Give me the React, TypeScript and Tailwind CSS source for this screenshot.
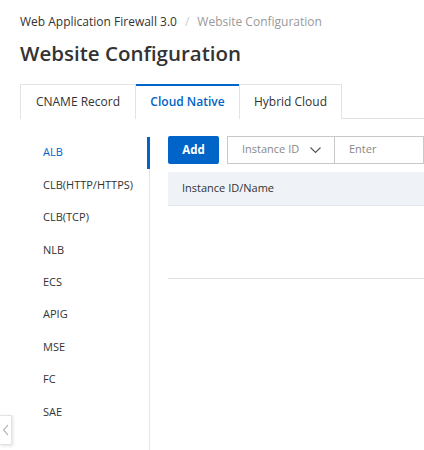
import React from 'react';

const navItems = ['ALB', 'CLB(HTTP/HTTPS)', 'CLB(TCP)', 'NLB', 'ECS', 'APIG', 'MSE', 'FC', 'SAE'];

export default function App() {
    return (
        <div className="relative w-[424px] h-[450px] overflow-hidden bg-white text-[#333] font-['Open_Sans',sans-serif]">
            {/* Breadcrumb */}
            <div className="pl-[20px] pt-[14px] text-[12px] leading-[16px] flex items-center gap-[8px]">
                <span className="text-[#333]">Web Application Firewall 3.0</span>
                <span className="text-[#ccc]">/</span>
                <span className="text-[#999]">Website Configuration</span>
            </div>

            {/* Title */}
            <h1 className="pl-[20px] mt-[9px] text-[20.5px] leading-[28px] font-semibold text-[#333]">Website Configuration</h1>

            {/* Tabs */}
            <div className="ml-[20px] mt-[17px] flex border-b border-[#e3e3e3] h-[35px]">
                <div className="w-[116px] flex items-center justify-center border border-[#e3e3e3] border-b-0 text-[12px] text-[#333] -mb-px bg-white">CNAME Record</div>
                <div className="w-[103px] flex items-center justify-center border-t-2 border-t-[#0064c8] border-b border-b-white text-[12px] font-semibold text-[#0064c8] -mb-px bg-white">Cloud Native</div>
                <div className="w-[103px] flex items-center justify-center border border-[#e3e3e3] border-b-0 text-[12px] text-[#333] -mb-px bg-white">Hybrid Cloud</div>
            </div>

            {/* Body */}
            <div className="flex mt-[17.5px]">
                <div className="w-[150px] shrink-0 border-r border-[#e5e5e5] h-[320px]">
                    {navItems.map((item, idx) => (
                        <div key={item} className={`relative h-[32.4px] pl-[43px] flex items-center text-[11px] ${idx === 0 ? 'text-[#0064c8]' : 'text-[#333]'}`}>
                            {item}
                            {idx === 0 && <div className="absolute right-[-1px] top-0 w-[3px] h-full bg-[#0064c8]" />}
                        </div>
                    ))}
                </div>

                <div className="flex-1 pl-[18px] -mt-px">
                    <div className="flex items-center h-[28px]">
                        <button className="w-[51px] h-[28px] rounded-[2px] bg-[#0064c8] text-white text-[11.5px] font-bold">Add</button>
                        <div className="ml-[8px] w-[108px] h-[28px] border border-[#c8c8c8] flex items-center justify-between pl-[14px] pr-[12px] text-[11px] text-[#888]">
                            <span>Instance ID</span>
                            <svg width="13" height="12" viewBox="0 0 13 12" fill="none" stroke="#555" strokeWidth="1.1">
                                <path d="M1.5 3.5l5 5 5-5" />
                            </svg>
                        </div>
                        <div className="flex-1 h-[28px] border border-l-0 border-[#c8c8c8] flex items-center pl-[14px] text-[11px] text-[#888] whitespace-nowrap">Enter</div>
                    </div>

                    <div className="mt-[8px] h-[34px] bg-[#eff2f6] border-b border-[#e0e3e8] flex items-center pl-[14px] text-[11px] text-[#333]">Instance ID/Name</div>
                    <div className="h-[73px] border-b border-[#e3e3e3]" />
                </div>
            </div>

            {/* Collapse handle */}
            <div className="absolute left-0 top-[415px] w-[12px] h-[30px] bg-white border border-l-0 border-[#e3e3e3] shadow-[1px_1px_3px_rgba(0,0,0,0.12)] flex items-center justify-center">
                <svg width="7" height="12" viewBox="0 0 7 12" fill="none" stroke="#b8b8b8" strokeWidth="1.2">
                    <path d="M6 1L1.5 6 6 11" />
                </svg>
            </div>
        </div>
    );
}
